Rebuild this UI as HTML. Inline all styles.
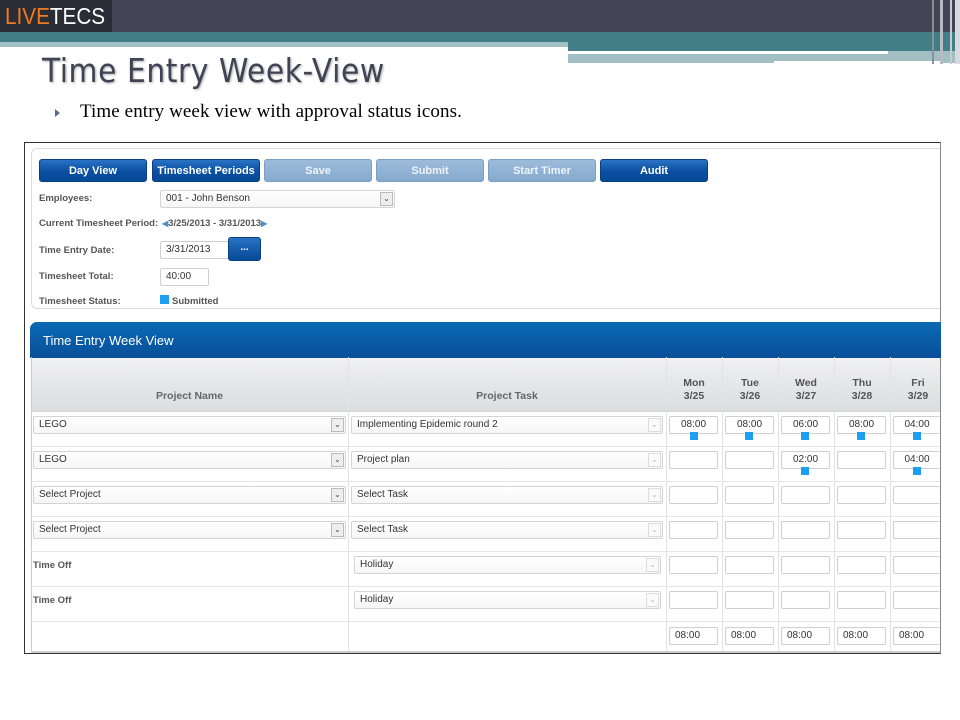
<!DOCTYPE html>
<html><head><meta charset="utf-8"><style>
*{margin:0;padding:0;box-sizing:border-box}
body{width:960px;height:720px;background:#fff;position:relative;overflow:hidden;font-family:"Liberation Sans",Arial,sans-serif}
.a{position:absolute}
.btn{position:absolute;top:159px;height:23px;width:108px;border-radius:3px;color:#fff;font-weight:bold;font-size:11px;text-align:center;line-height:23px}
.bd{background:linear-gradient(#2a72c4,#0a4fa0 55%,#064a96);border:1px solid #0b3f80}
.bl{background:linear-gradient(#9dbcdb,#85a9ce);border:1px solid #7d9fc4;color:#eef3f9}
.lbl{position:absolute;left:39px;font-size:9.5px;font-weight:bold;color:#555}
.inp{position:absolute;border:1px solid #cfcfcf;border-radius:2px;background:#fff;font-size:10px;color:#333;padding-left:5px;line-height:16px;height:18px}
.sel{position:absolute;border:1px solid #d4d4d4;border-radius:2px;background:linear-gradient(#fff,#f6f6f6);font-size:10px;color:#333;padding-left:5px;line-height:16px;height:18px}
.sel i{position:absolute;right:1px;top:1px;width:13px;height:14px;border:1px solid #bbb;background:#eee;font-style:normal;font-size:8px;line-height:12px;text-align:center;color:#444}
.sel.g i{border-color:#ddd;background:#fafafa;color:#bbb}
.day{position:absolute;width:49px;height:18px;border:1px solid #cfcfcf;border-radius:2px;font-size:10px;color:#333;text-align:center;line-height:16px;background:#fff}
.dl{position:absolute;width:49px;height:18px;border:1px solid #cfcfcf;border-radius:2px;font-size:10px;color:#333;padding-left:5px;line-height:16px;background:#fff}
.sq{position:absolute;width:8px;height:8px;background:#1e9ef0}
.hl{position:absolute;left:31px;width:909px;height:1px;background:#e6e6e6}
.vl{position:absolute;top:357px;height:294px;width:1px;background:#e3e3e3}
.dh{position:absolute;top:377px;width:56px;text-align:center;font-size:10.5px;font-weight:bold;color:#555;line-height:13px}
</style></head><body>
<div class="a" style="left:0;top:0;width:960px;height:32px;background:#434556"></div>
<div class="a" style="left:0;top:0;width:112px;height:32px;background:#2b2d36"></div>
<div class="a" style="left:5px;top:3px;font-size:23px;color:#fff;line-height:26px;transform:scaleX(.9);transform-origin:left"><span style="color:#f07a1e">LIVE</span>TECS</div>
<div class="a" style="left:0;top:32px;width:960px;height:10px;background:#417e86"></div>
<div class="a" style="left:0;top:42px;width:568px;height:5px;background:#a2c0c4"></div>
<div class="a" style="left:568px;top:42px;width:392px;height:9px;background:#417e86"></div>
<div class="a" style="left:568px;top:51px;width:392px;height:12px;background:#a2c0c4"></div>
<div class="a" style="left:568px;top:51px;width:320px;height:3px;background:#fff"></div>
<div class="a" style="left:774px;top:61px;width:168px;height:2px;background:#fff"></div>
<div class="a" style="left:932px;top:0;width:2px;height:64px;background:#8c8e9c"></div>
<div class="a" style="left:940px;top:0;width:3px;height:64px;background:#b8bac4"></div>
<div class="a" style="left:950px;top:0;width:2px;height:64px;background:#c8cad2"></div>
<div class="a" style="left:955px;top:0;width:5px;height:64px;background:#d8dae0"></div>
<div class="a" style="left:42px;top:51px;font-size:33px;color:#404354;text-shadow:1px 1px 2px #aaa;font-family:'Liberation Sans Narrow','DejaVu Sans Condensed',sans-serif;letter-spacing:0.6px;font-weight:normal">Time Entry Week-View</div>
<div class="a" style="left:55px;top:109px;width:0;height:0;border-left:5px solid #5a6e8a;border-top:4px solid transparent;border-bottom:4px solid transparent"></div>
<div class="a" style="left:80px;top:101px;font-size:19px;font-family:'Liberation Serif',serif;color:#000;letter-spacing:0.1px">Time entry week view with approval status icons.</div>

<div class="a" style="left:24px;top:142px;width:917px;height:512px;border:1px solid #333;border-right-color:#888"></div>
<div class="a" style="left:31px;top:148px;width:909px;height:161px;border:1px solid #ddd;border-right:none;border-radius:6px 0 0 6px"></div>
<div class="btn bd" style="left:39px">Day View</div>
<div class="btn bd" style="left:152px">Timesheet Periods</div>
<div class="btn bl" style="left:264px">Save</div>
<div class="btn bl" style="left:376px">Submit</div>
<div class="btn bl" style="left:488px">Start Timer</div>
<div class="btn bd" style="left:600px">Audit</div>
<div class="lbl" style="top:193px">Employees:</div>
<div class="sel" style="left:160px;top:190px;width:235px;height:18px;font-size:10px">001 - John Benson<i>&#8964;</i></div>
<div class="lbl" style="top:218px">Current Timesheet Period:</div>
<div class="a" style="left:162px;top:218px;font-size:9.5px;font-weight:bold;color:#555"><span style="color:#4a90d0;font-size:8px">&#9664;</span>3/25/2013 - 3/31/2013<span style="color:#4a90d0;font-size:8px">&#9654;</span></div>
<div class="lbl" style="top:245px">Time Entry Date:</div>
<div class="inp" style="left:160px;top:241px;width:70px">3/31/2013</div>
<div class="a" style="left:228px;top:237px;width:33px;height:24px;border-radius:3px;background:linear-gradient(#2a72c4,#064a96);border:1px solid #0b3f80;color:#fff;font-size:10px;font-weight:bold;text-align:center;line-height:20px">...</div>
<div class="lbl" style="top:271px">Timesheet Total:</div>
<div class="inp" style="left:160px;top:268px;width:49px">40:00</div>
<div class="lbl" style="top:296px">Timesheet Status:</div>
<div class="a" style="left:160px;top:295px;width:9px;height:9px;background:#1e9ef0"></div>
<div class="a" style="left:172px;top:296px;font-size:9.5px;font-weight:bold;color:#555">Submitted</div>

<div class="a" style="left:30px;top:322px;width:911px;height:36px;border-radius:7px 0 0 0;background:linear-gradient(#0a6ab3,#0a4f9a);"></div>
<div class="a" style="left:43px;top:333px;font-size:13px;color:#fff">Time Entry Week View</div>
<div class="a" style="left:31px;top:358px;width:909px;height:53px;background:linear-gradient(#f0f0f2,#dcdde0)"></div>
<div class="a" style="left:31px;top:390px;width:317px;text-align:center;font-size:10.5px;font-weight:bold;color:#666">Project Name</div>
<div class="a" style="left:348px;top:390px;width:318px;text-align:center;font-size:10.5px;font-weight:bold;color:#666">Project Task</div>
<div class="dh" style="left:666px">Mon<br>3/25</div>
<div class="dh" style="left:722px">Tue<br>3/26</div>
<div class="dh" style="left:778px">Wed<br>3/27</div>
<div class="dh" style="left:834px">Thu<br>3/28</div>
<div class="dh" style="left:890px">Fri<br>3/29</div>
<div class="vl" style="left:348px"></div>
<div class="vl" style="left:666px"></div>
<div class="vl" style="left:722px"></div>
<div class="vl" style="left:778px"></div>
<div class="vl" style="left:834px"></div>
<div class="vl" style="left:890px"></div>
<div class="vl" style="left:31px;background:#ccc"></div>
<div class="hl" style="top:411px;background:#d8d8d8"></div>
<div class="hl" style="top:446px"></div>
<div class="hl" style="top:481px"></div>
<div class="hl" style="top:516px"></div>
<div class="hl" style="top:551px"></div>
<div class="hl" style="top:586px"></div>
<div class="hl" style="top:621px"></div>
<div class="hl" style="top:651px;background:#ccc;height:2px"></div>

<div class="sel" style="left:33px;top:416px;width:313px">LEGO<i>&#8964;</i></div>
<div class="sel g" style="left:351px;top:416px;width:312px">Implementing Epidemic round 2<i>&#8964;</i></div>
<div class="day" style="left:669px;top:416px">08:00</div>
<div class="day" style="left:725px;top:416px">08:00</div>
<div class="day" style="left:781px;top:416px">06:00</div>
<div class="day" style="left:837px;top:416px">08:00</div>
<div class="day" style="left:893px;top:416px;width:47px;border-right:none">04:00</div>
<div class="sq" style="left:690px;top:432px"></div><div class="sq" style="left:745px;top:432px"></div><div class="sq" style="left:801px;top:432px"></div><div class="sq" style="left:857px;top:432px"></div><div class="sq" style="left:913px;top:432px"></div>

<div class="sel" style="left:33px;top:451px;width:313px">LEGO<i>&#8964;</i></div>
<div class="sel g" style="left:351px;top:451px;width:312px">Project plan<i>&#8964;</i></div>
<div class="day" style="left:669px;top:451px"></div>
<div class="day" style="left:725px;top:451px"></div>
<div class="day" style="left:781px;top:451px">02:00</div>
<div class="day" style="left:837px;top:451px"></div>
<div class="day" style="left:893px;top:451px;width:47px;border-right:none">04:00</div>
<div class="sq" style="left:801px;top:467px"></div><div class="sq" style="left:913px;top:467px"></div>

<div class="sel" style="left:33px;top:486px;width:313px">Select Project<i>&#8964;</i></div>
<div class="sel g" style="left:351px;top:486px;width:312px">Select Task<i>&#8964;</i></div>
<div class="sel" style="left:33px;top:521px;width:313px">Select Project<i>&#8964;</i></div>
<div class="sel g" style="left:351px;top:521px;width:312px">Select Task<i>&#8964;</i></div>
<div class="a" style="left:33px;top:560px;font-size:9.5px;font-weight:bold;color:#555">Time Off</div>
<div class="sel g" style="left:354px;top:556px;width:307px">Holiday<i>&#8964;</i></div>
<div class="a" style="left:33px;top:595px;font-size:9.5px;font-weight:bold;color:#555">Time Off</div>
<div class="sel g" style="left:354px;top:591px;width:307px">Holiday<i>&#8964;</i></div>

<div class="day" style="left:669px;top:486px"></div><div class="day" style="left:725px;top:486px"></div><div class="day" style="left:781px;top:486px"></div><div class="day" style="left:837px;top:486px"></div><div class="day" style="left:893px;top:486px;width:47px;border-right:none"></div>
<div class="day" style="left:669px;top:521px"></div><div class="day" style="left:725px;top:521px"></div><div class="day" style="left:781px;top:521px"></div><div class="day" style="left:837px;top:521px"></div><div class="day" style="left:893px;top:521px;width:47px;border-right:none"></div>
<div class="day" style="left:669px;top:556px"></div><div class="day" style="left:725px;top:556px"></div><div class="day" style="left:781px;top:556px"></div><div class="day" style="left:837px;top:556px"></div><div class="day" style="left:893px;top:556px;width:47px;border-right:none"></div>
<div class="day" style="left:669px;top:591px"></div><div class="day" style="left:725px;top:591px"></div><div class="day" style="left:781px;top:591px"></div><div class="day" style="left:837px;top:591px"></div><div class="day" style="left:893px;top:591px;width:47px;border-right:none"></div>
<div class="dl" style="left:669px;top:627px">08:00</div><div class="dl" style="left:725px;top:627px">08:00</div><div class="dl" style="left:781px;top:627px">08:00</div><div class="dl" style="left:837px;top:627px">08:00</div><div class="dl" style="left:893px;top:627px;width:47px;border-right:none">08:00</div>
</body></html>
